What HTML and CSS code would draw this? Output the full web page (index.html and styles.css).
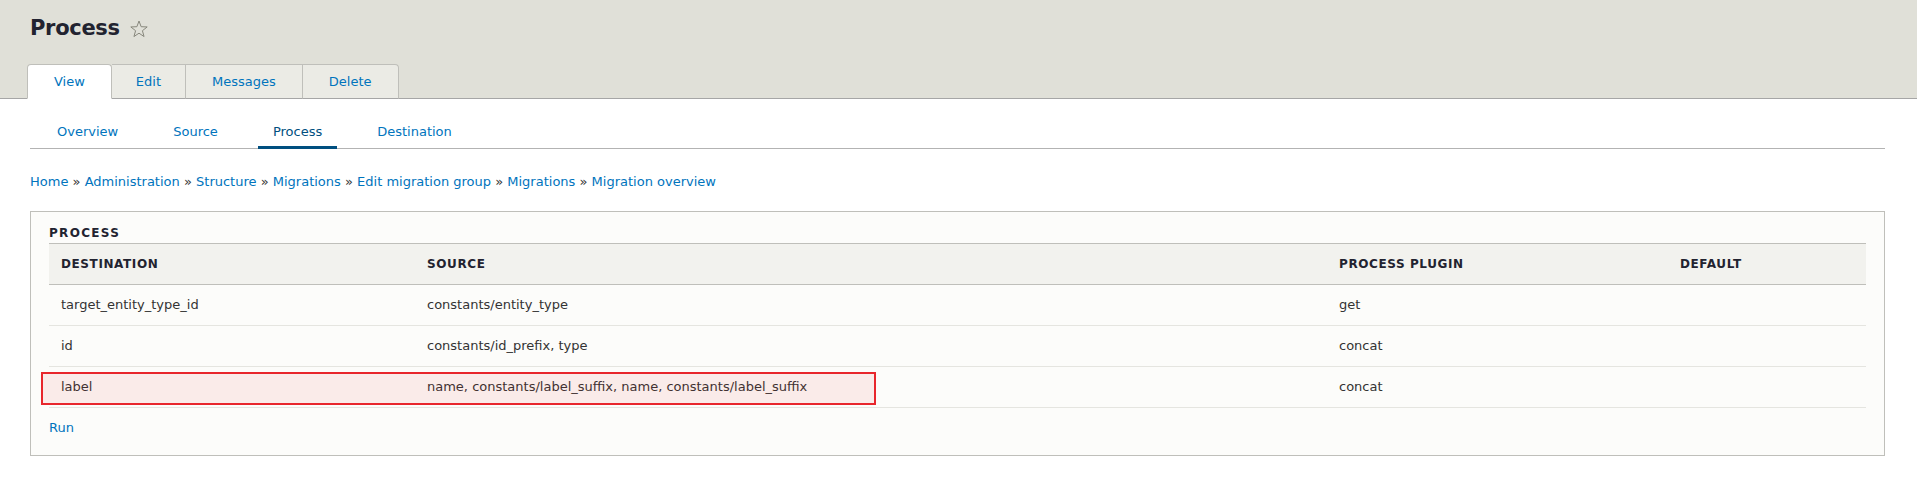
FILE: index.html
```html
<!DOCTYPE html>
<html lang="en">
<head>
  <meta charset="UTF-8">
  <title>Process</title>
  <link rel="stylesheet" href="styles.css">
</head>
<body>
  <!-- page header with title and primary tabs -->
  <header class="page-header">
    <h1 class="page-title">Process
      <span class="shortcut">
        <svg width="18" height="18" viewBox="0 0 18 18"><polygon points="9,1 11.12,6.69 17.18,6.94 12.42,10.71 14.05,16.56 9,13.2 3.95,16.56 5.58,10.71 0.82,6.94 6.88,6.69"/></svg>
      </span>
    </h1>
    <ul class="tabs-primary">
      <li class="is-active"><a href="#">View</a></li>
      <li><a href="#">Edit</a></li>
      <li><a href="#">Messages</a></li>
      <li class="last"><a href="#">Delete</a></li>
    </ul>
  </header>

  <main class="page-content">
    <ul class="tabs-secondary">
      <li><a href="#">Overview</a></li>
      <li><a href="#">Source</a></li>
      <li class="is-active"><a href="#">Process</a></li>
      <li><a href="#">Destination</a></li>
    </ul>

    <nav class="breadcrumb">
      <a href="#">Home</a> <span class="sep">»</span>
      <a href="#">Administration</a> <span class="sep">»</span>
      <a href="#">Structure</a> <span class="sep">»</span>
      <a href="#">Migrations</a> <span class="sep">»</span>
      <a href="#">Edit migration group</a> <span class="sep">»</span>
      <a href="#">Migrations</a> <span class="sep">»</span>
      <a href="#">Migration overview</a>
    </nav>

    <section class="details">
      <h2 class="details-title">Process</h2>
      <div class="table-wrap">
        <table class="mapping">
          <colgroup>
            <col class="col-dest">
            <col class="col-source">
            <col class="col-plugin">
            <col class="col-default">
          </colgroup>
          <thead>
            <tr>
              <th>Destination</th>
              <th>Source</th>
              <th>Process plugin</th>
              <th>Default</th>
            </tr>
          </thead>
          <tbody>
            <tr>
              <td>target_entity_type_id</td>
              <td>constants/entity_type</td>
              <td>get</td>
              <td></td>
            </tr>
            <tr>
              <td>id</td>
              <td>constants/id_prefix, type</td>
              <td>concat</td>
              <td></td>
            </tr>
            <tr>
              <td>label</td>
              <td>name, constants/label_suffix, name, constants/label_suffix</td>
              <td>concat</td>
              <td></td>
            </tr>
          </tbody>
        </table>
        <!-- annotation box drawn over the last row -->
        <div class="highlight"></div>
      </div>
      <a class="run-link" href="#">Run</a>
    </section>
  </main>
</body>
</html>
```

FILE: styles.css
```css
html, body {
  margin: 0;
  padding: 0;
  background: #fff;
}
body {
  font-family: "DejaVu Sans", Verdana, sans-serif;
  font-size: 13px;
  line-height: 20px;
  color: #222330;
}
a {
  color: #0074bd;
  text-decoration: none;
}
ul {
  list-style: none;
  margin: 0;
  padding: 0;
}

/* header */
.page-header {
  background: #e0e0d8;
  border-bottom: 1px solid #a6a6a6;
  padding: 13px 27px 0;
}
.page-title {
  margin: 0 0 0 3px;
  font-size: 21px;
  line-height: 30px;
  font-weight: bold;
  letter-spacing: -0.3px;
  color: #222330;
  display: flex;
  align-items: center;
}
.shortcut {
  display: inline-flex;
  margin-left: 10px;
  margin-top: 1px;
}
.shortcut polygon {
  fill: none;
  stroke: #87877c;
  stroke-width: 1;
}
.tabs-primary {
  display: flex;
  margin-top: 21px;
  margin-bottom: -1px;
}
.tabs-primary a {
  display: block;
  padding: 0 26px;
  line-height: 33px;
  background: #ebebe5;
  border: 1px solid #bfbfba;
  border-bottom-color: #a6a6a6;
  border-left: none;
}
.tabs-primary li:first-child a {
  border-left: 1px solid #bfbfba;
}
.tabs-primary li:nth-child(2) a {
  padding: 0 24px;
}
.tabs-primary .last a {
  border-top-right-radius: 4px;
}
.tabs-primary .is-active a {
  background: #fff;
  border-bottom-color: #fff;
  border-radius: 4px 4px 0 0;
}

/* content */
.page-content {
  padding: 0 32px 40px 30px;
}
.tabs-secondary {
  display: flex;
  margin-top: 20px;
  padding-left: 12px;
  border-bottom: 1px solid #b3b3b3;
}
.tabs-secondary li {
  margin-right: 25px;
}
.tabs-secondary a {
  display: block;
  padding: 3px 15px 4px;
  line-height: 20px;
  border-bottom: 3px solid transparent;
  margin-bottom: -1px;
}
.tabs-secondary .is-active a {
  color: #004f80;
  border-bottom-color: #004f80;
}

.breadcrumb {
  margin-top: 23px;
  line-height: 20px;
}
.breadcrumb .sep {
  color: #333;
}

.details {
  margin-top: 19px;
  border: 1px solid #bfbfba;
  background: #fcfcfa;
  padding: 11px 18px 17px;
}
.details-title {
  margin: 0;
  font-size: 12px;
  line-height: 20px;
  font-weight: bold;
  text-transform: uppercase;
  letter-spacing: 1.3px;
  color: #222330;
}

.table-wrap {
  position: relative;
}
.mapping {
  width: 100%;
  border-collapse: collapse;
  table-layout: fixed;
  color: #333;
}
.col-dest { width: 366px; }
.col-source { width: 912px; }
.col-plugin { width: 341px; }
.mapping th,
.mapping td {
  text-align: left;
  padding: 10px 12px;
  line-height: 20px;
  white-space: nowrap;
}
.mapping thead tr {
  background: #f2f2ee;
  border-top: 1px solid #bfbfba;
  border-bottom: 1px solid #bfbfba;
}
.mapping th {
  font-size: 12px;
  font-weight: bold;
  text-transform: uppercase;
  letter-spacing: 0.6px;
  color: #222330;
}
.mapping tbody tr {
  border-bottom: 1px solid #e5e5e0;
}
.highlight {
  position: absolute;
  left: -8px;
  top: 129px;
  width: 835px;
  height: 33px;
  box-sizing: border-box;
  border: 2px solid #e8262c;
  background: rgba(230, 40, 40, 0.08);
  pointer-events: none;
}

.run-link {
  display: inline-block;
  margin-top: 10px;
  line-height: 20px;
}
```
